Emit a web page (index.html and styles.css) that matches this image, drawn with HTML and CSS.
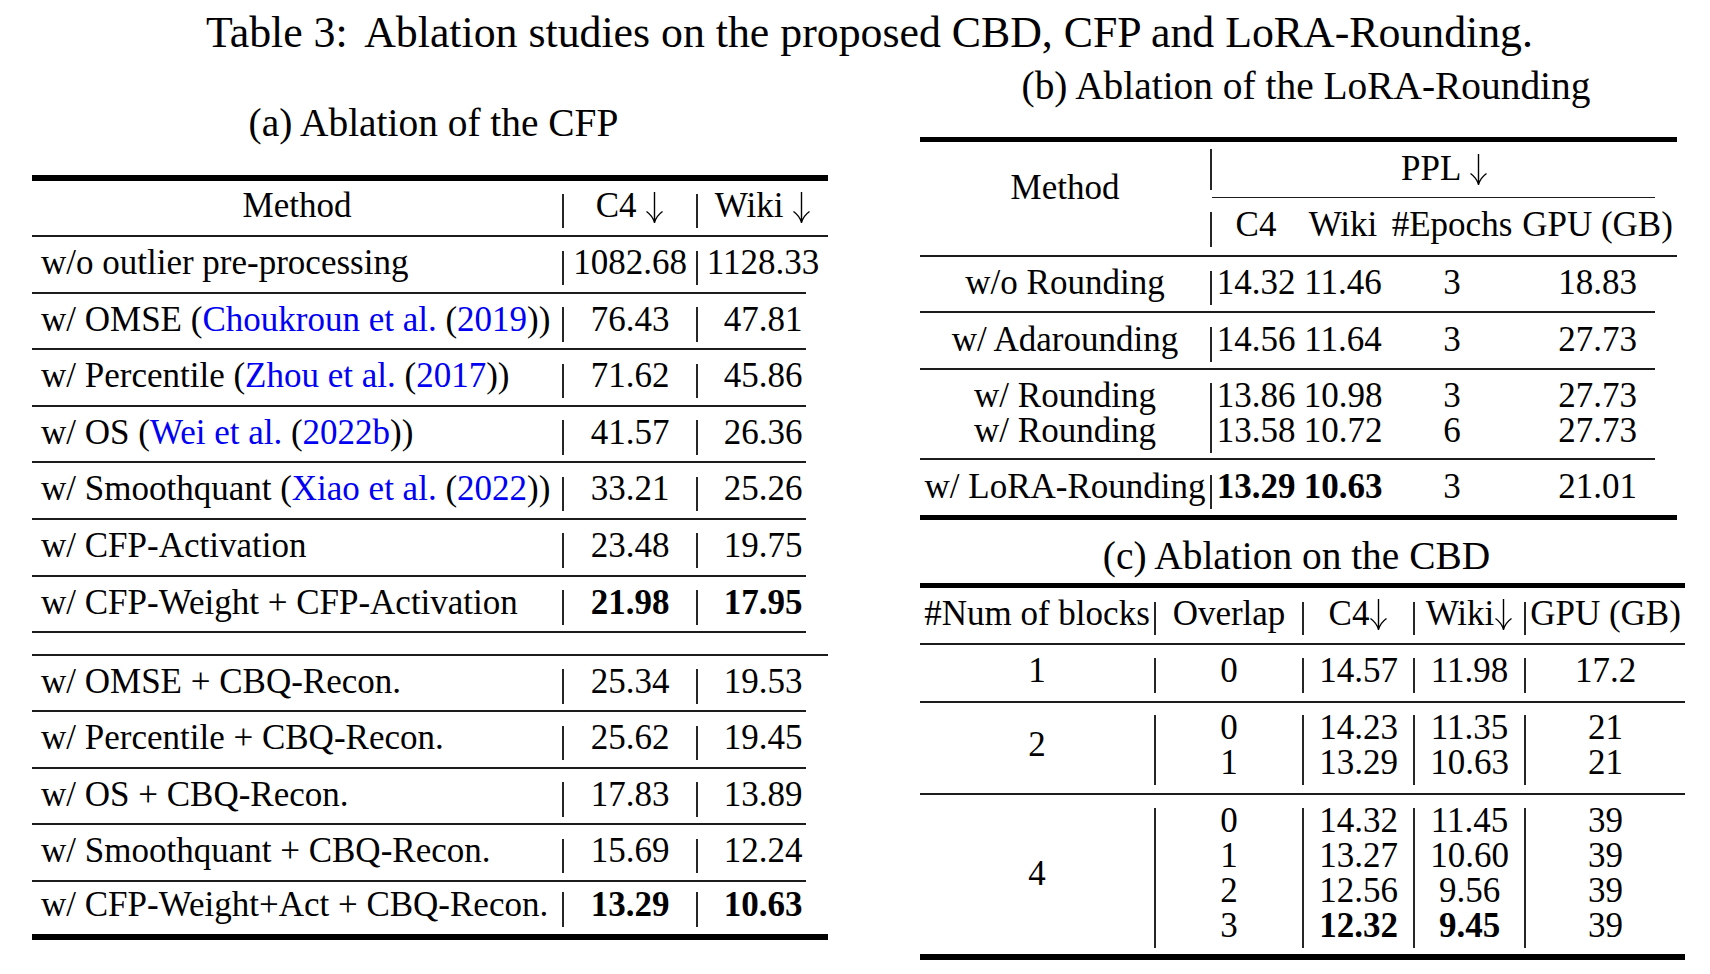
FILE: index.html
```html
<!DOCTYPE html>
<html lang="en">
<head>
<meta charset="utf-8">
<title>Table 3: Ablation studies</title>
<link rel="stylesheet" href="styles.css">
</head>
<body>
<h1 class="title"><span class="lbl">Table 3:</span> Ablation studies on the proposed CBD, CFP and LoRA-Rounding.</h1>
<div class="cols">
  <section class="col col-a">
    <div class="cap cap-a">(a) Ablation of the CFP</div>
    <div class="tbl ta">
      <div class="rule thick"></div>
      <div class="row hdr">
        <div class="cell m">Method</div><div class="bar"></div>
        <div class="cell c4">C4 <svg class="arr" viewBox="0 0 19 31" width="19" height="31"><path d="M9.5 0V30M1.5 19.5C5 22 8 25.5 9.5 30.5C11 25.5 14 22 17.5 19.5"/></svg></div><div class="bar"></div>
        <div class="cell wk">Wiki <svg class="arr" viewBox="0 0 19 31" width="19" height="31"><path d="M9.5 0V30M1.5 19.5C5 22 8 25.5 9.5 30.5C11 25.5 14 22 17.5 19.5"/></svg></div>
      </div>
      <div class="rule"></div>
      <div class="row"><div class="cell m">w/o outlier pre-processing</div><div class="bar"></div><div class="cell c4">1082.68</div><div class="bar"></div><div class="cell wk">1128.33</div></div>
      <div class="rule short"></div>
      <div class="row"><div class="cell m">w/ OMSE (<span class="cite">Choukroun et al.</span> (<span class="cite">2019</span>))</div><div class="bar"></div><div class="cell c4">76.43</div><div class="bar"></div><div class="cell wk">47.81</div></div>
      <div class="rule short"></div>
      <div class="row"><div class="cell m">w/ Percentile (<span class="cite">Zhou et al.</span> (<span class="cite">2017</span>))</div><div class="bar"></div><div class="cell c4">71.62</div><div class="bar"></div><div class="cell wk">45.86</div></div>
      <div class="rule short"></div>
      <div class="row"><div class="cell m">w/ OS (<span class="cite">Wei et al.</span> (<span class="cite">2022b</span>))</div><div class="bar"></div><div class="cell c4">41.57</div><div class="bar"></div><div class="cell wk">26.36</div></div>
      <div class="rule short"></div>
      <div class="row"><div class="cell m">w/ Smoothquant (<span class="cite">Xiao et al.</span> (<span class="cite">2022</span>))</div><div class="bar"></div><div class="cell c4">33.21</div><div class="bar"></div><div class="cell wk">25.26</div></div>
      <div class="rule short"></div>
      <div class="row"><div class="cell m">w/ CFP-Activation</div><div class="bar"></div><div class="cell c4">23.48</div><div class="bar"></div><div class="cell wk">19.75</div></div>
      <div class="rule short"></div>
      <div class="row"><div class="cell m">w/ CFP-Weight + CFP-Activation</div><div class="bar"></div><div class="cell c4"><b>21.98</b></div><div class="bar"></div><div class="cell wk"><b>17.95</b></div></div>
      <div class="rule short"></div>
      <div class="gap"></div>
      <div class="rule"></div>
      <div class="row"><div class="cell m">w/ OMSE + CBQ-Recon.</div><div class="bar"></div><div class="cell c4">25.34</div><div class="bar"></div><div class="cell wk">19.53</div></div>
      <div class="rule short"></div>
      <div class="row"><div class="cell m">w/ Percentile + CBQ-Recon.</div><div class="bar"></div><div class="cell c4">25.62</div><div class="bar"></div><div class="cell wk">19.45</div></div>
      <div class="rule short"></div>
      <div class="row"><div class="cell m">w/ OS + CBQ-Recon.</div><div class="bar"></div><div class="cell c4">17.83</div><div class="bar"></div><div class="cell wk">13.89</div></div>
      <div class="rule short"></div>
      <div class="row"><div class="cell m">w/ Smoothquant + CBQ-Recon.</div><div class="bar"></div><div class="cell c4">15.69</div><div class="bar"></div><div class="cell wk">12.24</div></div>
      <div class="rule short"></div>
      <div class="row last"><div class="cell m">w/ CFP-Weight+Act + CBQ-Recon.</div><div class="bar"></div><div class="cell c4"><b>13.29</b></div><div class="bar"></div><div class="cell wk"><b>10.63</b></div></div>
      <div class="rule thick"></div>
    </div>
  </section>

  <section class="col col-b">
    <div class="cap cap-b">(b) Ablation of the LoRA-Rounding</div>
    <div class="tbl tb">
      <div class="rule thick"></div>
      <div class="hdr">
        <div class="cell m hm">Method</div>
        <div class="hr">
          <div class="row sub1"><div class="bar tall"></div><div class="cell ppl">PPL <svg class="arr" viewBox="0 0 19 31" width="19" height="31"><path d="M9.5 0V30M1.5 19.5C5 22 8 25.5 9.5 30.5C11 25.5 14 22 17.5 19.5"/></svg></div></div>
          <div class="cmid"></div>
          <div class="row sub2"><div class="bar"></div><div class="cell c4">C4</div><div class="cell wk">Wiki</div><div class="cell ep">#Epochs</div><div class="cell gp">GPU (GB)</div></div>
        </div>
      </div>
      <div class="rule"></div>
      <div class="row"><div class="cell m">w/o Rounding</div><div class="bar"></div><div class="cell c4">14.32</div><div class="cell wk">11.46</div><div class="cell ep">3</div><div class="cell gp">18.83</div></div>
      <div class="rule short"></div>
      <div class="row"><div class="cell m">w/ Adarounding</div><div class="bar"></div><div class="cell c4">14.56</div><div class="cell wk">11.64</div><div class="cell ep">3</div><div class="cell gp">27.73</div></div>
      <div class="rule short"></div>
      <div class="row dbl"><div class="cell m">w/ Rounding<br>w/ Rounding</div><div class="bar l2"></div><div class="cell c4">13.86<br>13.58</div><div class="cell wk">10.98<br>10.72</div><div class="cell ep">3<br>6</div><div class="cell gp">27.73<br>27.73</div></div>
      <div class="rule short"></div>
      <div class="row last"><div class="cell m">w/ LoRA-Rounding</div><div class="bar"></div><div class="cell c4"><b>13.29</b></div><div class="cell wk"><b>10.63</b></div><div class="cell ep">3</div><div class="cell gp">21.01</div></div>
      <div class="rule thick"></div>
    </div>

    <div class="cap cap-c">(c) Ablation on the CBD</div>
    <div class="tbl tc">
      <div class="rule thick"></div>
      <div class="row hdr"><div class="cell k1">#Num of blocks</div><div class="bar"></div><div class="cell k2">Overlap</div><div class="bar"></div><div class="cell k3">C4<svg class="arr" viewBox="0 0 19 31" width="19" height="31"><path d="M9.5 0V30M1.5 19.5C5 22 8 25.5 9.5 30.5C11 25.5 14 22 17.5 19.5"/></svg></div><div class="bar"></div><div class="cell k4">Wiki<svg class="arr" viewBox="0 0 19 31" width="19" height="31"><path d="M9.5 0V30M1.5 19.5C5 22 8 25.5 9.5 30.5C11 25.5 14 22 17.5 19.5"/></svg></div><div class="bar"></div><div class="cell k5">GPU (GB)</div></div>
      <div class="rule"></div>
      <div class="row r1"><div class="cell k1">1</div><div class="bar"></div><div class="cell k2">0</div><div class="bar"></div><div class="cell k3">14.57</div><div class="bar"></div><div class="cell k4">11.98</div><div class="bar"></div><div class="cell k5">17.2</div></div>
      <div class="rule"></div>
      <div class="row r2"><div class="cell k1 n2">2</div><div class="bar l2"></div><div class="cell k2">0<br>1</div><div class="bar l2"></div><div class="cell k3">14.23<br>13.29</div><div class="bar l2"></div><div class="cell k4">11.35<br>10.63</div><div class="bar l2"></div><div class="cell k5">21<br>21</div></div>
      <div class="rule"></div>
      <div class="row r4"><div class="cell k1 n4">4</div><div class="bar l4"></div><div class="cell k2">0<br>1<br>2<br>3</div><div class="bar l4"></div><div class="cell k3">14.32<br>13.27<br>12.56<br><b>12.32</b></div><div class="bar l4"></div><div class="cell k4">11.45<br>10.60<br>9.56<br><b>9.45</b></div><div class="bar l4"></div><div class="cell k5">39<br>39<br>39<br>39</div></div>
      <div class="rule thick c"></div>
    </div>
  </section>
</div>
</body>
</html>
```

FILE: styles.css
```css
* { box-sizing: border-box; }
html, body { margin: 0; padding: 0; background: #fff; }
body {
  width: 1710px;
  height: 974px;
  overflow: hidden;
  font-family: "Liberation Serif", "Times New Roman", serif;
  color: #000;
}

.title {
  margin: 0;
  padding: 7px 0 0 29px;
  font-size: 43.8px;
  font-weight: normal;
  line-height: 50px;
  text-align: center;
  white-space: nowrap;
}
.title .lbl { margin-right: 8px; }

.cols {
  display: flex;
  align-items: flex-start;
  gap: 92px;
  padding-left: 32px;
}

.cap {
  font-size: 39.4px;
  line-height: 45px;
  text-align: center;
  white-space: nowrap;
}

.col-a { width: 796px; margin-top: 44px; }
.cap-a { padding-left: 7px; margin-bottom: 29px; }

.col-b { width: 765px; margin-top: 7px; }
.cap-b { padding-left: 7px; margin-bottom: 28px; }
.cap-c { padding-right: 12px; margin-top: 13.8px; margin-bottom: 3.8px; }

/* generic table parts */
.tbl { font-size: 35px; line-height: 35px; white-space: nowrap; }
.rule { height: 2px; background: #1c1c1c; }
.rule.thick { height: 5px; background: #000; }
.row { display: flex; align-items: flex-start; }
.cell { flex: none; text-align: center; }
.bar {
  flex: none;
  width: 2px;
  height: 34.5px;
  margin: 5.5px 0 -20px;
  background: #262626;
}
.bar.l2 { height: 69.5px; }
.bar.l4 { height: 140px; }
.cite { color: #0000f4; }
b { font-weight: bold; }
.arr {
  vertical-align: -5.5px;
  fill: none;
  stroke: #000;
  stroke-width: 1.4;
}

/* table (a) */
.ta { width: 796px; }
.ta .rule.thick { height: 6px; }
.ta .rule.short { width: 774px; }
.ta .row { padding: 8px 0 11.6px; }
.ta .row.hdr { padding: 7px 0 12px; }
.ta .row.last { padding: 4.5px 0 12.1px; }
.ta .m { width: 530px; text-align: left; padding-left: 9px; }
.ta .hdr .m { text-align: center; padding-left: 0; }
.ta .c4 { width: 132px; }
.ta .wk { width: 130px; }
.ta .gap { height: 20.5px; }

/* table (b) */
.tb { width: 757px; }
.tb .rule.short { width: 735px; }
.tb .m { width: 290px; }
.tb .c4 { width: 88px; }
.tb .wk { width: 86px; }
.tb .ep { width: 132px; }
.tb .gp { width: 159px; }
.tb .hdr { display: flex; height: 112.7px; }
.tb .hm { padding-top: 28px; }
.tb .hr { width: 467px; }
.tb .sub1 { padding: 9px 0 11.7px; }
.tb .sub1 .bar.tall { margin-top: -2px; height: 41px; }
.tb .ppl { width: 465px; }
.tb .cmid { width: 443px; height: 1.5px; margin-left: 2px; background: #1c1c1c; }
.tb .sub2 { padding: 9px 0 11.5px; }
.tb .row { padding: 8.5px 0 11px; }
.tb .row.dbl { padding: 8px 0 9.9px; line-height: 35.3px; }
.tb .row.last { padding: 9px 0 11.2px; }

/* table (c) */
.tc { width: 765px; line-height: 35.3px; }
.tc .rule.thick.c { height: 6px; }
.tc .k1 { width: 234px; }
.tc .k2 { width: 146px; }
.tc .k3 { width: 109px; }
.tc .k4 { width: 109px; }
.tc .k5 { width: 159px; }
.tc .row.hdr { padding: 7.7px 0 12.3px; line-height: 35px; }
.tc .row.hdr .bar { margin-top: 6px; height: 33px; }
.tc .row.r1 { padding: 7.7px 0 13.3px; line-height: 35px; }
.tc .row.r2 { padding: 6.7px 0 12.7px; }
.tc .row.r4 { padding: 7.7px 0 10.1px; }
.tc .n2 { line-height: 70.6px; }
.tc .n4 { line-height: 141.2px; }
```
